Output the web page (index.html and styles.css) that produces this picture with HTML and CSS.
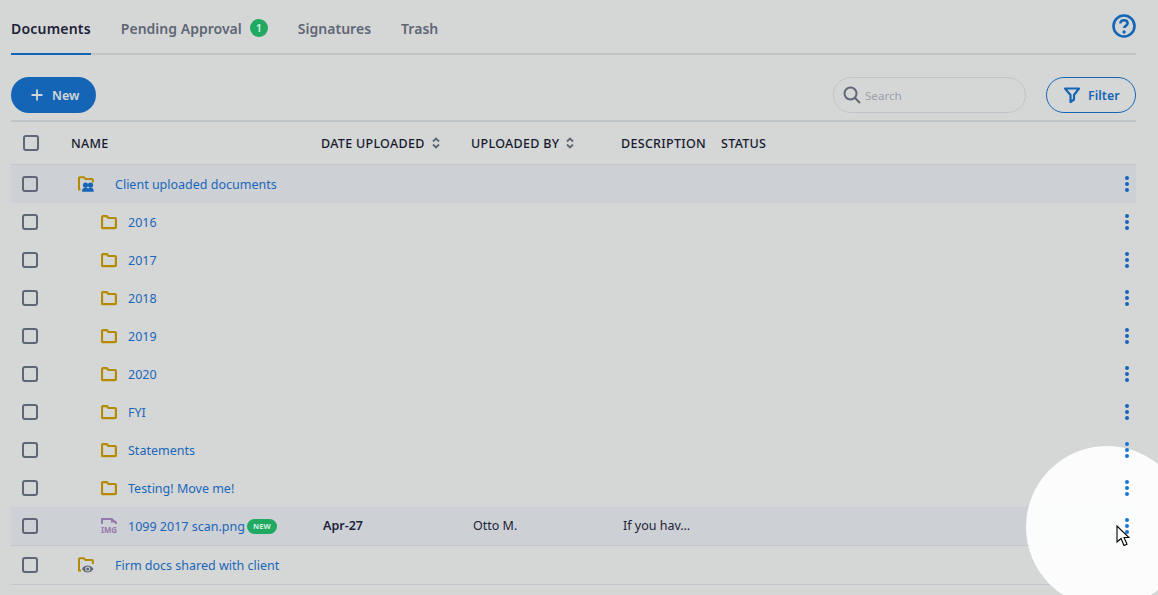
FILE: index.html
```html
<!DOCTYPE html>
<html lang="en">
<head>
<meta charset="utf-8">
<title>Documents</title>
<link rel="stylesheet" href="styles.css">
</head>
<body>
<svg class="defs" width="0" height="0" aria-hidden="true">
  <symbol id="folder" viewBox="0 0 16 14"><path d="M1 12.200V2.200c0-.6.4-1 1-1h3.800l1.600 1.800h6.400c.6 0 1.100.4 1.100 1v8.200c0 .6-.5 1-1.100 1H2c-.6 0-1-.4-1-1z" fill="none" stroke="#b38a00" stroke-width="2.200"/></symbol>
  <symbol id="dots" viewBox="0 0 6 18"><circle cx="3" cy="3" r="2" fill="currentColor"/><circle cx="3" cy="9" r="2" fill="currentColor"/><circle cx="3" cy="15" r="2" fill="currentColor"/></symbol>
  <symbol id="sort" viewBox="0 0 8 12"><path d="M1 4.500 4 1.500l3 3M1 7.500l3 3 3-3" fill="none" stroke="#5f6675" stroke-width="1.800"/></symbol>
</svg>

<main class="page">
  <nav class="tabs">
    <a class="tab active">Documents</a>
    <a class="tab">Pending Approval <span class="count">1</span></a>
    <a class="tab">Signatures</a>
    <a class="tab">Trash</a>
    <svg class="help" viewBox="0 0 24 24" width="24" height="24"><circle cx="12" cy="12" r="10.500" fill="none" stroke="#1565b7" stroke-width="2.600"/><path d="M8.400 9.500c0-2.100 1.600-3.300 3.600-3.300s3.600 1.200 3.600 3.100c0 2.500-3.500 2.500-3.500 4.800" fill="none" stroke="#1565b7" stroke-width="2.600"/><circle cx="12.100" cy="18" r="1.700" fill="#1565b7"/></svg>
  </nav>

  <div class="toolbar">
    <button class="new"><svg viewBox="0 0 12 12" width="12" height="12"><path d="M6 .500v11M.500 6h11" stroke="#d5d7d6" stroke-width="1.800"/></svg><span>New</span></button>
    <div class="tools">
      <div class="search"><svg viewBox="0 0 18 18" width="18" height="18"><circle cx="7.500" cy="7.500" r="6" fill="none" stroke="#5f6675" stroke-width="2"/><path d="M12 12l5 5" stroke="#5f6675" stroke-width="2"/></svg><span>Search</span></div>
      <button class="filter"><svg viewBox="0 0 16 16" width="16" height="16"><path d="M1 1.500h14L10 8v4.500L6.500 15V8z" fill="none" stroke="#1565b7" stroke-width="2.200" stroke-linejoin="round"/></svg><span>Filter</span></button>
    </div>
  </div>

  <div class="head">
    <span class="check"></span>
    <span class="h-name">NAME</span>
    <span class="h-date">DATE UPLOADED <svg class="sort"><use href="#sort"/></svg></span>
    <span class="h-by">UPLOADED BY <svg class="sort"><use href="#sort"/></svg></span>
    <span class="h-desc">DESCRIPTION</span>
    <span>STATUS</span>
  </div>

  <section class="rows">
    <div class="row top shaded">
      <span class="check"></span>
      <svg class="ficon" viewBox="0 0 16 16"><path d="M1 12V2.200c0-.6.4-1 1-1h3.800l1.600 1.800h6.400c.6 0 1.100.4 1.100 1v2.500" fill="none" stroke="#b38a00" stroke-width="2"/><path d="M1 12v1.500h1.500" fill="none" stroke="#b38a00" stroke-width="2"/><circle cx="7.500" cy="9" r="2.600" fill="#1565b7"/><circle cx="12.500" cy="9" r="2.600" fill="#1565b7"/><path d="M4 15.800c0-2.800 1.500-4.200 3.500-4.200 1.300 0 2.200.5 2.600 1.300.5-.8 1.300-1.300 2.400-1.300 2 0 3.300 1.400 3.300 4.200z" fill="#1565b7"/></svg>
      <a>Client uploaded documents</a>
      <svg class="dots"><use href="#dots"/></svg>
    </div>
    <div class="row sub"><span class="check"></span><svg class="ficon"><use href="#folder"/></svg><a>2016</a><svg class="dots"><use href="#dots"/></svg></div>
    <div class="row sub"><span class="check"></span><svg class="ficon"><use href="#folder"/></svg><a>2017</a><svg class="dots"><use href="#dots"/></svg></div>
    <div class="row sub"><span class="check"></span><svg class="ficon"><use href="#folder"/></svg><a>2018</a><svg class="dots"><use href="#dots"/></svg></div>
    <div class="row sub"><span class="check"></span><svg class="ficon"><use href="#folder"/></svg><a>2019</a><svg class="dots"><use href="#dots"/></svg></div>
    <div class="row sub"><span class="check"></span><svg class="ficon"><use href="#folder"/></svg><a>2020</a><svg class="dots"><use href="#dots"/></svg></div>
    <div class="row sub"><span class="check"></span><svg class="ficon"><use href="#folder"/></svg><a>FYI</a><svg class="dots"><use href="#dots"/></svg></div>
    <div class="row sub"><span class="check"></span><svg class="ficon"><use href="#folder"/></svg><a>Statements</a></div>
    <div class="row sub"><span class="check"></span><svg class="ficon"><use href="#folder"/></svg><a>Testing! Move me!</a></div>
    <div class="row sub shaded ruled file">
      <span class="check"></span>
      <svg class="ficon tall" viewBox="0 0 16 18"><path d="M1 6V1h9.500L15 4.500V6" fill="none" stroke="#9479ad" stroke-width="2"/><path d="M10 1v3.500h4" fill="#9479ad"/><text class="img-label" x="0" y="15" textLength="16" lengthAdjust="spacingAndGlyphs">IMG</text></svg>
      <a>1099 2017 scan.png</a>
      <span class="new-tag">NEW</span>
      <span class="c-date">Apr-27</span>
      <span class="c-by">Otto M.</span>
      <span class="c-desc">If you hav…</span>
    </div>
    <div class="row top ruled">
      <span class="check"></span>
      <svg class="ficon" viewBox="0 0 16 16"><path d="M1 12V2.200c0-.6.4-1 1-1h3.800l1.600 1.800h6.400c.6 0 1.100.4 1.100 1v3" fill="none" stroke="#b38a00" stroke-width="2"/><path d="M1 12v1.500h2" fill="none" stroke="#b38a00" stroke-width="2"/><path d="M4 12c1.500-2.600 3.500-3.500 5.500-3.500s4.500 1 6 3.500c-1.500 2.500-4 3.500-6 3.500S5.500 14.500 4 12z" fill="#5f6675"/><circle cx="9.700" cy="12" r="2.500" fill="#d5d7d6"/><circle cx="9.700" cy="12" r="1.500" fill="#5f6675"/></svg>
      <a>Firm docs shared with client</a>
    </div>
  </section>
</main>

<div class="spotlight"></div>
<svg class="dots lit one"><use href="#dots"/></svg>
<svg class="dots lit two"><use href="#dots"/></svg>
<svg class="dots lit three"><use href="#dots"/></svg>
<svg class="cursor" viewBox="0 0 14 22" width="14" height="22"><path d="M1 1v16l4-3.500 3 7 3-1.300-3-6.700h5z" fill="#fff" stroke="#000" stroke-width="1.100"/></svg>
</body>
</html>
```
FILE: styles.css
```css
* { box-sizing: border-box; }
html, body { margin: 0; height: 595px; overflow: hidden; }
body { background: #d5d7d6; font-family: "Noto Sans", sans-serif; color: #1a1f36; position: relative; }
.defs { position: absolute; }
.page { padding: 0 22px 0 11px; }

.tabs { display: flex; align-items: center; gap: 30px; height: 55px; border-bottom: 2px solid #bfc4c6; position: relative; }
.tab { font-size: 14px; font-weight: 600; color: #5f6675; height: 55px; line-height: 61px; display: flex; align-items: center; gap: 8px; padding-top: 3px; letter-spacing: .02px; }
.tab.active { color: #1d2238; border-bottom: 2px solid #1565b7; margin-bottom: -2px; letter-spacing: .2px; padding-top: 4px; }
.count { width: 18px; height: 18px; border-radius: 50%; background: #1fa961; color: #d5f0e2; font-size: 11px; line-height: 18px; text-align: center; }
.help { margin-left: auto; margin-bottom: 2px; }

.toolbar { display: flex; justify-content: space-between; align-items: flex-start; height: 67px; border-bottom: 2px solid #bfc4c6; padding-top: 22px; }
.new { display: flex; align-items: center; gap: 9px; width: 85px; height: 36px; padding: 0 0 0 20px; border: 0; border-radius: 18px; background: #1565b7; color: #d5d7d6; font: 600 12.500px "Noto Sans", sans-serif; }
.tools { display: flex; gap: 20px; }
.search { display: flex; align-items: center; gap: 4px; width: 193px; height: 36px; padding-left: 9px; border: 1px solid #c0c5cb; border-radius: 18px; color: #9a9fa9; font-size: 11.600px; }
.filter { display: flex; align-items: center; gap: 8px; width: 90px; height: 36px; padding: 0 0 0 17px; border: 1px solid #1565b7; border-radius: 18px; background: none; color: #1565b7; font: 600 12.500px "Noto Sans", sans-serif; }

.head { display: flex; align-items: center; height: 43px; border-bottom: 1px solid #bfc6cc; font-size: 12.500px; font-weight: 500; letter-spacing: .3px; color: #151a2e; }
.head .check { margin-left: 12px; }
.h-name { margin-left: 32px; width: 250px; }
.h-date { width: 150px; display: flex; align-items: center; gap: 7px; }
.h-by { width: 150px; display: flex; align-items: center; gap: 7px; }
.h-desc { width: 100px; }
.sort { width: 8px; height: 12px; }

.row { display: flex; align-items: center; height: 38px; font-size: 12.500px; position: relative; }
.row a { color: #1a66ba; }
.shaded { background: #cdd1d5; }
.ruled { height: 39px; border-bottom: 1px solid #bfc6cc; }
.check { flex: none; width: 16px; height: 16px; margin-left: 11px; border: 2px solid #5f6675; border-radius: 3px; }
.ficon { flex: none; width: 16px; height: 16px; }
.ficon.tall { height: 18px; margin-top: 2px; }
.top .ficon { margin-left: 40px; }
.top a { margin-left: 21px; }
.sub .ficon { margin-left: 63px; }
.sub a { margin-left: 11px; }
.img-label { font-family: "Noto Sans", sans-serif; font-size: 8.500px; font-weight: 700; fill: #9479ad; }
.dots { position: absolute; right: 6px; top: 10px; width: 6px; height: 18px; color: #1565b7; }
.new-tag { margin-left: 2px; width: 30px; height: 15px; border-radius: 8px; background: #1fa961; color: #d5f0e2; font-size: 7.500px; font-weight: 700; line-height: 15px; text-align: center; }
.c-date, .c-by, .c-desc { position: absolute; top: 10px; color: #1d2238; }
.c-date { left: 312px; font-weight: 600; }
.c-by { left: 462px; }
.c-desc { left: 612px; }

.spotlight { position: absolute; left: 1026px; top: 446px; width: 162px; height: 162px; border-radius: 50%; background: rgba(255, 255, 255, .92); }
.lit { left: 1124px; right: auto; color: #1a73d0; }
.lit.one { top: 441px; }
.lit.two { top: 479px; }
.lit.three { top: 517px; }
.cursor { position: absolute; left: 1116px; top: 525px; }
```
